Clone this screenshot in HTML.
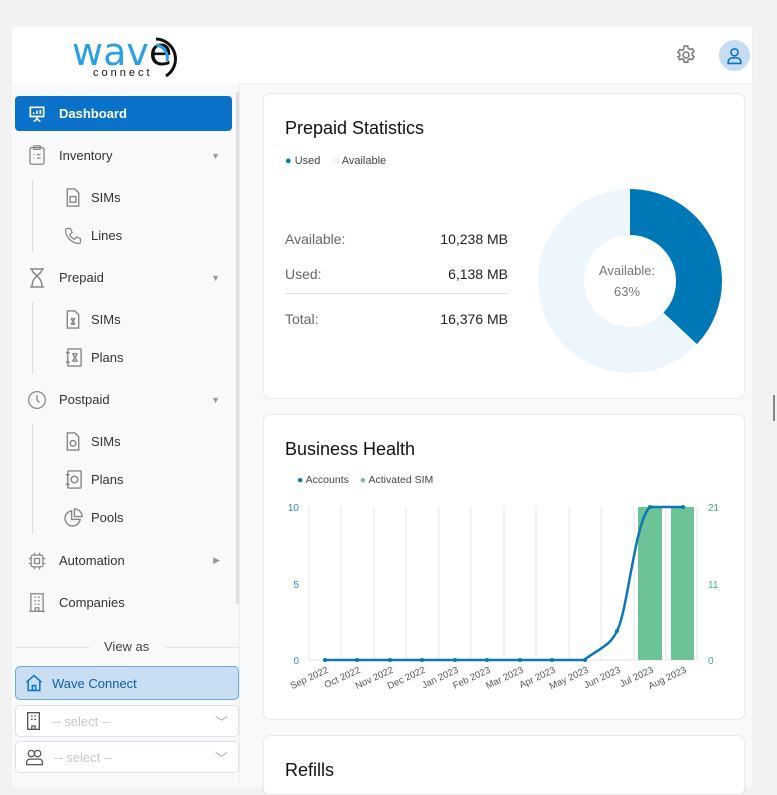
<!DOCTYPE html>
<html><head><meta charset="utf-8"><style>
*{box-sizing:border-box;margin:0;padding:0}
body{width:777px;height:777px;overflow:hidden;background:#f2f2f2;font-family:"Liberation Sans",sans-serif;position:relative;color:#222}
.frame{position:absolute;left:12px;top:27px;width:740px;height:760px;background:#f8f9fb}
.header{position:absolute;left:12px;top:27px;width:740px;height:56px;background:#fff;box-shadow:0 1px 2px rgba(0,0,0,.04)}
.side{position:absolute;left:12px;top:83px;width:228px;height:700px;background:#f8f9fb;border-right:1px solid #eceef1}
.sb{position:absolute;left:236px;top:92px;width:3px;height:512px;background:#ddd;border-radius:2px}
.item{position:absolute;left:15px;width:217px;height:35px;display:flex;align-items:center;font-size:13px;color:#333}
.item .ic{width:44px;display:flex;justify-content:center}
.item.active{background:#0b72c9;color:#fff;border-radius:4px;font-weight:bold}
.sub{left:55px;}
.sub .ic{width:36px}
.arr{position:absolute;right:12px;color:#999;font-size:9px}
.vline{position:absolute;left:32px;width:1px;background:#ddd}
.card{position:absolute;left:263px;width:482px;background:#fff;border:1px solid #e7e9ec;border-radius:7px}
h2{font-weight:normal;font-size:18px;color:#111;position:absolute;left:21px}
.sel{position:absolute;left:15px;width:224px;height:32px;border:1px solid #dde0e4;border-radius:5px;background:#fff;display:flex;align-items:center;font-size:13px;color:#c4c6c9}
svg{display:block}
</style></head><body>
<div class="frame"></div>
<div class="header">
  <div style="position:absolute;left:60px;top:9px;">
    <div style="font-size:38px;color:#2aa0e6;line-height:32px;letter-spacing:0px;font-family:'DejaVu Sans',sans-serif">wav<span style="color:#111">e</span></div>
    <div style="font-size:11px;letter-spacing:3px;color:#111;margin-left:21px;line-height:10px">connect</div>
  </div>
  <svg style="position:absolute;left:130px;top:9px" width="45" height="46" viewBox="0 0 45 46"><path d="M14 3 A20 20 0 0 1 24 40" fill="none" stroke="#111" stroke-width="3"/><path d="M14 9 A13 13 0 0 1 25 25" fill="none" stroke="#2aa0e6" stroke-width="3"/></svg>
  <svg style="position:absolute;left:662px;top:16px" width="24" height="24" viewBox="0 0 24 24" fill="none" stroke="#777" stroke-width="1.5"><circle cx="12" cy="12" r="3"/><path d="M10.3 3h3.4l.5 2.4 1.8 1 2.3-.8 1.7 2.9-1.8 1.6v2l1.8 1.6-1.7 2.9-2.3-.8-1.8 1-.5 2.4h-3.4l-.5-2.4-1.8-1-2.3.8-1.7-2.9L5.8 13v-2L4 9.4l1.7-2.9 2.3.8 1.8-1z"/></svg>
  <div style="position:absolute;left:707px;top:13px;width:31px;height:31px;border-radius:50%;background:#c5dcf3"><svg style="margin:6px" width="19" height="19" viewBox="0 0 24 24" fill="none" stroke="#0b72c9" stroke-width="2"><circle cx="12" cy="8" r="4.5"/><path d="M4 22v-2a5 5 0 0 1 5-5h6a5 5 0 0 1 5 5v2z"/></svg></div>
</div>
<div class="side"></div>
<div class="sb"></div>
<div class="item active" style="top:96px"><div class="ic"><svg width="20" height="20" viewBox="0 0 24 24" fill="none" stroke="#fff" stroke-width="2"><path d="M3 4h18M4 4v11h16V4M12 15v3M8 21l4-3 4 3M8 12v-2M12 12V8M16 12V7"/></svg></div>Dashboard</div>
<div class="item" style="top:138px"><div class="ic"><svg width="18" height="21" viewBox="0 0 20 24" fill="none" stroke="#888" stroke-width="1.5"><rect x="2" y="3" width="16" height="19" rx="2"/><rect x="6" y="1" width="8" height="4" rx="1"/><path d="M6 11h1M6 15h1M10 11h4M10 15h4"/></svg></div>Inventory<span class="arr">▼</span></div>
<div class="vline" style="top:180px;height:72px"></div>
<div class="item sub" style="top:180px"><div class="ic"><svg width="16" height="19" viewBox="0 0 16 20" fill="none" stroke="#888" stroke-width="1.5"><path d="M2 1h8l4 4v14H2z"/><rect x="5" y="9" width="6" height="6"/></svg></div>SIMs</div>
<div class="item sub" style="top:218px"><div class="ic"><svg width="20" height="20" viewBox="0 0 24 24" fill="none" stroke="#888" stroke-width="1.5"><path d="M5 3h4l2 5-3 2a11 11 0 0 0 6 6l2-3 5 2v4a2 2 0 0 1-2 2A17 17 0 0 1 3 5a2 2 0 0 1 2-2"/></svg></div>Lines</div>
<div class="item" style="top:260px"><div class="ic"><svg width="16" height="20" viewBox="0 0 16 20" fill="none" stroke="#888" stroke-width="1.5"><path d="M1 1h14M1 19h14M3 1c0 6 10 6 10 18M13 1C13 7 3 7 3 19"/></svg></div>Prepaid<span class="arr">▼</span></div>
<div class="vline" style="top:302px;height:72px"></div>
<div class="item sub" style="top:302px"><div class="ic"><svg width="16" height="19" viewBox="0 0 16 20" fill="none" stroke="#888" stroke-width="1.5"><path d="M2 1h8l4 4v14H2z"/><path d="M6 9h4M6 15h4M6 9l4 6M10 9l-4 6"/></svg></div>SIMs</div>
<div class="item sub" style="top:340px"><div class="ic"><svg width="19" height="19" viewBox="0 0 20 20" fill="none" stroke="#888" stroke-width="1.5"><rect x="4" y="1" width="14" height="18" rx="1"/><path d="M2 5h4M2 15h4M9 6h5M9 14h5M9 6l5 8M14 6l-5 8"/></svg></div>Plans</div>
<div class="item" style="top:382px"><div class="ic"><svg width="20" height="20" viewBox="0 0 24 24" fill="none" stroke="#888" stroke-width="1.5"><circle cx="12" cy="12" r="10"/><path d="M12 6v6l3 3"/></svg></div>Postpaid<span class="arr">▼</span></div>
<div class="vline" style="top:424px;height:110px"></div>
<div class="item sub" style="top:424px"><div class="ic"><svg width="16" height="19" viewBox="0 0 16 20" fill="none" stroke="#888" stroke-width="1.5"><path d="M2 1h8l4 4v14H2z"/><circle cx="8" cy="12" r="3"/></svg></div>SIMs</div>
<div class="item sub" style="top:462px"><div class="ic"><svg width="19" height="19" viewBox="0 0 20 20" fill="none" stroke="#888" stroke-width="1.5"><rect x="4" y="1" width="14" height="18" rx="1"/><path d="M2 5h4M2 15h4"/><circle cx="11" cy="10" r="3.5"/></svg></div>Plans</div>
<div class="item sub" style="top:500px"><div class="ic"><svg width="19" height="19" viewBox="0 0 20 20" fill="none" stroke="#888" stroke-width="1.5"><path d="M8 3a8 8 0 1 0 9 9H8z"/><path d="M11 1a8 8 0 0 1 8 8h-8z"/></svg></div>Pools</div>
<div class="item" style="top:543px"><div class="ic"><svg width="20" height="20" viewBox="0 0 24 24" fill="none" stroke="#888" stroke-width="1.5"><rect x="5" y="5" width="14" height="14" rx="2"/><rect x="9" y="9" width="6" height="6"/><path d="M9 2v3M15 2v3M9 19v3M15 19v3M2 9h3M2 15h3M19 9h3M19 15h3"/></svg></div>Automation<span class="arr">▶</span></div>
<div class="item" style="top:585px"><div class="ic"><svg width="18" height="21" viewBox="0 0 20 24" fill="none" stroke="#888" stroke-width="1.5"><rect x="3" y="2" width="14" height="20"/><path d="M1 22h18M7 6h2M11 6h2M7 10h2M11 10h2M7 14h2M11 14h2M8 22v-4h4v4"/></svg></div>Companies</div>
<div style="position:absolute;left:15px;top:647px;width:75px;height:1px;background:#e2e4e7"></div>
<div style="position:absolute;left:165px;top:647px;width:74px;height:1px;background:#e2e4e7"></div>
<div style="position:absolute;left:104px;top:639px;font-size:13px;color:#444">View as</div>
<div class="sel" style="top:666px;height:34px;background:#c9def3;border-color:#6fa6dd;color:#0b5fae"><svg style="margin:0 8px 0 8px" width="20" height="20" viewBox="0 0 24 24" fill="none" stroke="#0b72c9" stroke-width="1.8"><path d="M3 11l9-8 9 8M5 9v12h14V9M10 21v-6h4v6"/></svg>Wave Connect</div>
<div class="sel" style="top:705px"><svg style="margin:0 10px 0 9px" width="17" height="20" viewBox="0 0 20 24" fill="none" stroke="#555" stroke-width="1.6"><rect x="3" y="2" width="14" height="20"/><path d="M7 6h2M11 6h2M7 10h2M11 10h2M8 22v-4h4v4"/></svg>-- select --<span style="position:absolute;right:10px;color:#aaa">﹀</span></div>
<div class="sel" style="top:741px"><svg style="margin:0 10px 0 9px" width="19" height="19" viewBox="0 0 24 24" fill="none" stroke="#555" stroke-width="1.6"><circle cx="8" cy="7" r="4"/><circle cx="16" cy="7" r="4"/><path d="M2 21v-3a4 4 0 0 1 4-4h12a4 4 0 0 1 4 4v3z"/></svg>-- select --<span style="position:absolute;right:10px;color:#aaa">﹀</span></div>

<div class="card" style="top:93px;height:306px">
  <h2 style="top:24px">Prepaid Statistics</h2>
  <div style="position:absolute;left:21px;top:61px;font-size:11px;color:#444"><span style="color:#0b77b5">●</span> Used &nbsp;&nbsp;&nbsp;<span style="color:#ccc">○</span> Available</div>
  <div style="position:absolute;left:21px;top:137px;width:223px;font-size:14px;color:#666">
    <div style="display:flex;justify-content:space-between;height:35px">Available:<span style="color:#222">10,238 MB</span></div>
    <div style="display:flex;justify-content:space-between;height:27px">Used:<span style="color:#222">6,138 MB</span></div>
    <div style="border-top:1px solid #ddd;padding-top:17px;display:flex;justify-content:space-between">Total:<span style="color:#222">16,376 MB</span></div>
  </div>
  <svg style="position:absolute;left:271px;top:94px" width="190" height="190" viewBox="0 0 190 190">
    <circle cx="95" cy="93" r="69" fill="none" stroke="#eef6fd" stroke-width="46"/>
    <circle cx="95" cy="93" r="69" fill="none" stroke="#0077b6" stroke-width="46" stroke-dasharray="160.5 500" transform="rotate(-90 95 93)"/>
    <text x="92" y="87" text-anchor="middle" font-size="13" fill="#777" font-family="Liberation Sans">Available:</text>
    <text x="92" y="108" text-anchor="middle" font-size="13" fill="#777" font-family="Liberation Sans">63%</text>
  </svg>
</div>

<div class="card" style="top:414px;height:306px">
  <h2 style="top:24px">Business Health</h2>
</div>
<svg style="position:absolute;left:263px;top:460px" width="482" height="240" viewBox="263 460 482 240" font-family="Liberation Sans" font-size="10">
  <text x="297" y="483" fill="#444" font-size="10.5"><tspan fill="#0b77b5">●</tspan> Accounts <tspan dx="8" fill="#6cc496">●</tspan> Activated SIM</text>
  <g stroke="#e6e6e6">
    <line x1="309" y1="507" x2="309" y2="660"/><line x1="341" y1="507" x2="341" y2="660"/><line x1="374" y1="507" x2="374" y2="660"/><line x1="406" y1="507" x2="406" y2="660"/><line x1="439" y1="507" x2="439" y2="660"/><line x1="471" y1="507" x2="471" y2="660"/><line x1="504" y1="507" x2="504" y2="660"/><line x1="536" y1="507" x2="536" y2="660"/><line x1="569" y1="507" x2="569" y2="660"/><line x1="601" y1="507" x2="601" y2="660"/><line x1="634" y1="507" x2="634" y2="660"/><line x1="666" y1="507" x2="666" y2="660"/><line x1="697" y1="507" x2="697" y2="660"/>
    <line x1="309" y1="660" x2="697" y2="660"/>
  </g>
  <rect x="638" y="507" width="24" height="153" fill="#6cc496"/>
  <rect x="671" y="507" width="23" height="153" fill="#6cc496"/>
  <path d="M325 660H584C600 648 610 646 617 631C628 610 635 520 650 507H683" fill="none" stroke="#0b77b5" stroke-width="2.5"/>
  <g fill="#0b77b5"><circle cx="325" cy="660" r="2"/><circle cx="357" cy="660" r="2"/><circle cx="390" cy="660" r="2"/><circle cx="422" cy="660" r="2"/><circle cx="455" cy="660" r="2"/><circle cx="487" cy="660" r="2"/><circle cx="520" cy="660" r="2"/><circle cx="552" cy="660" r="2"/><circle cx="585" cy="660" r="2"/><circle cx="617" cy="631" r="2"/><circle cx="650" cy="507" r="2"/><circle cx="683" cy="507" r="2"/></g>
  <g fill="#2a8cc4" text-anchor="end"><text x="299" y="511">10</text><text x="299" y="588">5</text><text x="299" y="664">0</text></g>
  <g fill="#3bb27a"><text x="708" y="511">21</text><text x="708" y="588">11</text><text x="708" y="664">0</text></g>
  <g fill="#555" font-size="9.5" text-anchor="end">
    <text transform="translate(329 672) rotate(-25)">Sep 2022</text><text transform="translate(361 672) rotate(-25)">Oct 2022</text><text transform="translate(394 672) rotate(-25)">Nov 2022</text><text transform="translate(426 672) rotate(-25)">Dec 2022</text><text transform="translate(459 672) rotate(-25)">Jan 2023</text><text transform="translate(491 672) rotate(-25)">Feb 2023</text><text transform="translate(524 672) rotate(-25)">Mar 2023</text><text transform="translate(556 672) rotate(-25)">Apr 2023</text><text transform="translate(589 672) rotate(-25)">May 2023</text><text transform="translate(621 672) rotate(-25)">Jun 2023</text><text transform="translate(654 672) rotate(-25)">Jul 2023</text><text transform="translate(687 672) rotate(-25)">Aug 2023</text>
  </g>
</svg>

<div class="card" style="top:735px;height:60px"><h2 style="top:24px">Refills</h2></div>
<div style="position:absolute;left:773px;top:395px;width:2px;height:26px;background:#888"></div>
</body></html>
